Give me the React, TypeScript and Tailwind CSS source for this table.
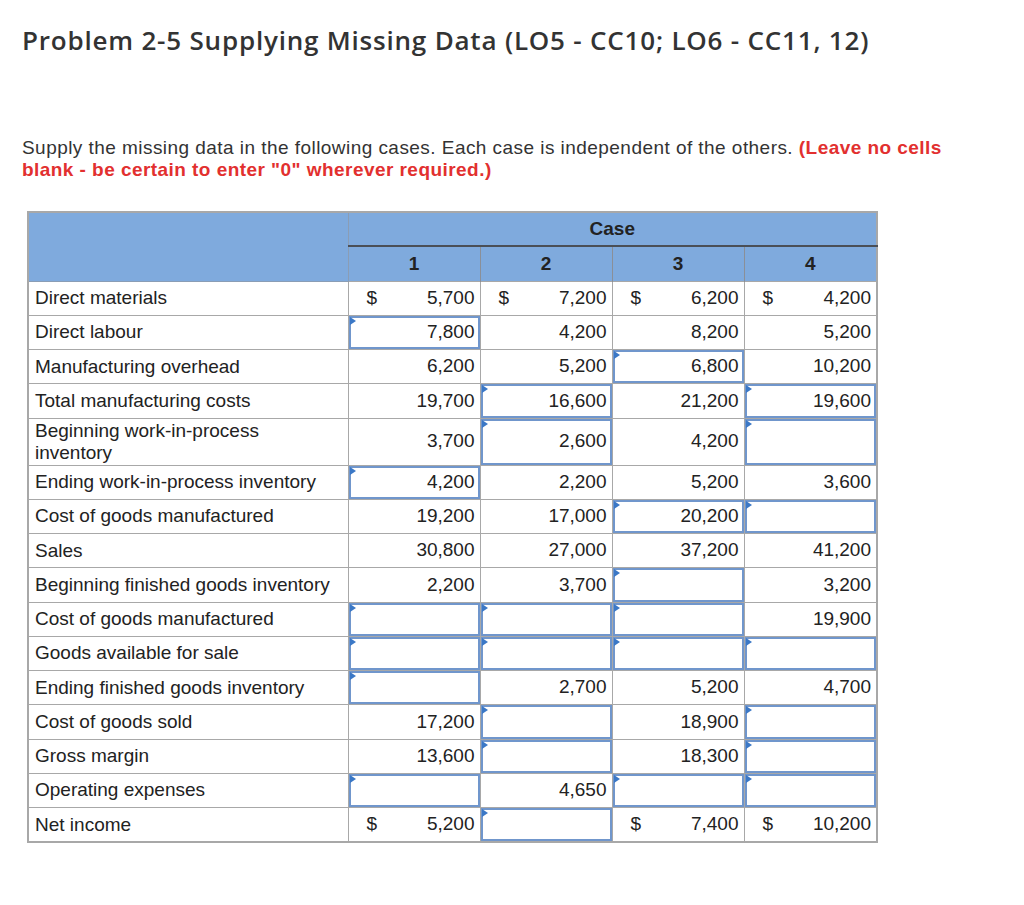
type Cell = { v?: string; d?: boolean; i?: boolean };
type Row = { label: string; cells: Cell[]; tall?: boolean };

const rows: Row[] = [
  { label: "Direct materials", cells: [{ v: "5,700", d: true }, { v: "7,200", d: true }, { v: "6,200", d: true }, { v: "4,200", d: true }] },
  { label: "Direct labour", cells: [{ v: "7,800", i: true }, { v: "4,200" }, { v: "8,200" }, { v: "5,200" }] },
  { label: "Manufacturing overhead", cells: [{ v: "6,200" }, { v: "5,200" }, { v: "6,800", i: true }, { v: "10,200" }] },
  { label: "Total manufacturing costs", cells: [{ v: "19,700" }, { v: "16,600", i: true }, { v: "21,200" }, { v: "19,600", i: true }] },
  { label: "Beginning work-in-process inventory", tall: true, cells: [{ v: "3,700" }, { v: "2,600", i: true }, { v: "4,200" }, { i: true }] },
  { label: "Ending work-in-process inventory", cells: [{ v: "4,200", i: true }, { v: "2,200" }, { v: "5,200" }, { v: "3,600" }] },
  { label: "Cost of goods manufactured", cells: [{ v: "19,200" }, { v: "17,000" }, { v: "20,200", i: true }, { i: true }] },
  { label: "Sales", cells: [{ v: "30,800" }, { v: "27,000" }, { v: "37,200" }, { v: "41,200" }] },
  { label: "Beginning finished goods inventory", cells: [{ v: "2,200" }, { v: "3,700" }, { i: true }, { v: "3,200" }] },
  { label: "Cost of goods manufactured", cells: [{ i: true }, { i: true }, { i: true }, { v: "19,900" }] },
  { label: "Goods available for sale", cells: [{ i: true }, { i: true }, { i: true }, { i: true }] },
  { label: "Ending finished goods inventory", cells: [{ i: true }, { v: "2,700" }, { v: "5,200" }, { v: "4,700" }] },
  { label: "Cost of goods sold", cells: [{ v: "17,200" }, { i: true }, { v: "18,900" }, { i: true }] },
  { label: "Gross margin", cells: [{ v: "13,600" }, { i: true }, { v: "18,300" }, { i: true }] },
  { label: "Operating expenses", cells: [{ i: true }, { v: "4,650" }, { i: true }, { i: true }] },
  { label: "Net income", cells: [{ v: "5,200", d: true }, { i: true }, { v: "7,400", d: true }, { v: "10,200", d: true }] },
];

function DataCell({ cell, tall }: { cell: Cell; tall?: boolean }) {
  const h = tall ? "h-[46px]" : "h-[33.25px]";
  if (cell.i) {
    return (
      <td className="p-0 border border-[#a8a8a8]">
        <div className={`relative ${h} border-2 border-[#7096cc] bg-white flex items-center justify-end pr-[3px]`}>
          <span className="absolute left-[-1px] top-[-1px] w-0 h-0 border-t-[4px] border-b-[4px] border-l-[6px] border-t-transparent border-b-transparent border-l-[#3b78c6]"></span>
          {cell.v}
        </div>
      </td>
    );
  }
  return (
    <td className="p-0 border border-[#a8a8a8]">
      <div className={`${h} flex items-center justify-between pl-[18px] pr-[5px]`}>
        <span>{cell.d ? "$" : ""}</span>
        <span>{cell.v}</span>
      </div>
    </td>
  );
}

export default function App() {
  return (
    <div className="w-[1024px] min-h-[905px] bg-white px-[22px] pt-[22px] text-[#222]">
      <h1 className="font-['Open_Sans',sans-serif] font-semibold text-[26px] leading-[36px] tracking-[0.8px] text-[#333]">
        Problem 2-5 Supplying Missing Data (LO5 - CC10; LO6 - CC11, 12)
      </h1>

      <p className="mt-[79px] w-[960px] font-['Liberation_Sans',Arial,sans-serif] text-[19px] leading-[22px] tracking-[0.45px] text-[#333]">
        Supply the missing data in the following cases. Each case is independent of the others.{" "}
        <span className="font-bold text-[#e2302f]">(Leave no cells blank - be certain to enter "0" wherever required.)</span>
      </p>

      <table className="mt-[30px] ml-[5px] table-fixed border-collapse border-2 border-[#a8a8a8] font-['Liberation_Sans',Arial,sans-serif] text-[19px] text-[#222]">
        <colgroup>
          <col className="w-[320px]" />
          <col className="w-[132px]" />
          <col className="w-[132px]" />
          <col className="w-[132px]" />
          <col className="w-[133px]" />
        </colgroup>
        <thead>
          <tr className="bg-[#7faadd]">
            <th rowSpan={2} className="border border-[#8a9db5]"></th>
            <th colSpan={4} className="h-[34px] border-b-2 border-b-[#4a4f57] font-bold text-center">Case</th>
          </tr>
          <tr className="bg-[#7faadd]">
            {["1", "2", "3", "4"].map((n) => (
              <th key={n} className="h-[35px] border-l border-[#8a8f98] font-bold text-center">{n}</th>
            ))}
          </tr>
        </thead>
        <tbody>
          {rows.map((r, idx) => (
            <tr key={idx}>
              <td className="p-0 border border-[#a8a8a8]">
                <div className={`${r.tall ? "h-[46px]" : "h-[33.25px]"} flex items-center pl-[6px] leading-[22px]`}>
                  {r.tall ? (
                    <span>Beginning work-in-process<br />inventory</span>
                  ) : (
                    r.label
                  )}
                </div>
              </td>
              {r.cells.map((c, j) => (
                <DataCell key={j} cell={c} tall={r.tall} />
              ))}
            </tr>
          ))}
        </tbody>
      </table>
    </div>
  );
}
